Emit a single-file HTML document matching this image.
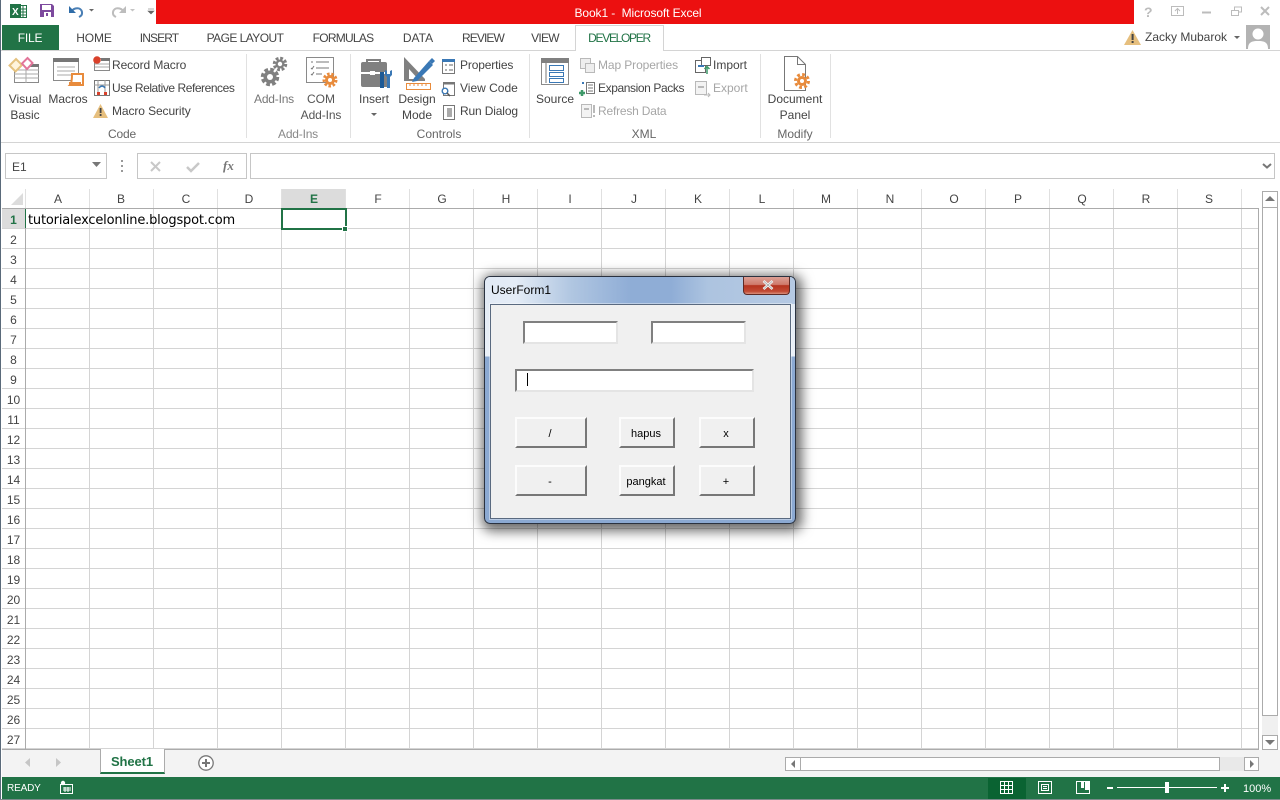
<!DOCTYPE html>
<html><head><meta charset="utf-8"><title>Book1 - Microsoft Excel</title>
<style>
html,body{margin:0;padding:0;width:1280px;height:800px;overflow:hidden;background:#fff}
body{position:relative;font-family:"Liberation Sans",sans-serif;font-size:12px;color:#444}
.t{position:absolute;white-space:nowrap;line-height:16px}
.c{transform:translateX(-50%);text-align:center}
.b{position:absolute;box-sizing:border-box}
svg{position:absolute;overflow:visible}
.tab{position:absolute;top:30px;font-size:12px;line-height:16px;color:#444;white-space:nowrap;transform:translateX(-50%)}
.g{color:#a6a6a6}
.grp{color:#666}
.sep{position:absolute;top:54px;width:1px;height:84px;background:#e1e1e1}
.ch{position:absolute;top:191px;font-size:12px;line-height:16px;color:#444;transform:translateX(-50%)}
.rh{position:absolute;left:2px;width:23px;text-align:center;font-size:12px;line-height:16px;color:#444}
.tb{position:absolute;box-sizing:border-box;background:#fff;border:2px solid;border-color:#808080 #e4e4e4 #e4e4e4 #808080}
.btn{position:absolute;box-sizing:border-box;background:#f0f0f0;border:2px solid;border-color:#fcfcfc #777 #777 #fcfcfc;color:#000;font-size:11px;text-align:center;line-height:30px;padding-right:2px}
</style></head><body>

<!-- title bar -->
<div class="b" style="left:156px;top:0;width:978px;height:24px;background:#ec1010"></div>
<div class="t c" style="left:638px;top:5px;color:#fff;font-size:12px;letter-spacing:-.1px">Book1 -&nbsp; Microsoft Excel</div>

<!-- QAT -->
<svg style="left:0;top:0" width="156" height="25">
<rect x="17.500" y="5.500" width="9" height="12" fill="#fff" stroke="#217346"/><path d="M20 9h6M20 12h6M20 15h6M23 5v12" stroke="#217346" fill="none"/>
<rect x="10" y="4" width="11" height="14" fill="#217346"/><text x="12" y="15" font-size="10" font-weight="700" fill="#fff" font-family="Liberation Sans">X</text>
<path d="M40 4h12l2 2v11H40z" fill="#7d4a9e"/><rect x="42" y="5" width="9" height="5" fill="#fff"/><rect x="44" y="12" width="7" height="5" fill="#fff"/><rect x="46" y="13" width="2" height="3" fill="#7d4a9e"/>
<path d="M71 12c3-5 10-5 11 0 .4 3-1 4-3 5" fill="none" stroke="#4a7fb5" stroke-width="2"/><path d="M69 6v7h7z" fill="#2f6ca8"/>
<path d="M89 9h5l-2.500 2.500z" fill="#666"/>
<path d="M124 12c-3-5-10-5-11 0-.4 3 1 4 3 5" fill="none" stroke="#bdbdbd" stroke-width="2"/><path d="M126 6v7h-7z" fill="#bdbdbd"/>
<path d="M130 9h5l-2.500 2.500z" fill="#c4c4c4"/>
<path d="M148 9h6M148 11h6l-3 3z" fill="#666" stroke="#666" stroke-width=".6"/>
</svg>

<!-- window controls -->
<svg style="left:1080px;top:0" width="200" height="25">
<text x="64" y="17" font-size="14" font-weight="700" fill="#bcbcbc" font-family="Liberation Sans">?</text>
<rect x="91.500" y="6.500" width="12" height="9" fill="none" stroke="#bcbcbc"/><path d="M97.500 14v-5M95 11l2.500-2.500 2.500 2.500" fill="none" stroke="#bcbcbc"/>
<path d="M122 12.500h9" stroke="#bcbcbc" stroke-width="2"/>
<path d="M151.500 10.500h7v5h-7zM154.500 10v-3h7v5h-3" fill="none" stroke="#bcbcbc" stroke-width="1"/>
<path d="M181 7l8 8M189 7l-8 8" stroke="#bcbcbc" stroke-width="2"/>
</svg>

<!-- tabs -->
<div class="b" style="left:2px;top:25px;width:57px;height:25px;background:#217346"></div>
<div class="t c" style="left:30px;top:30px;color:#fff;letter-spacing:-.2px">FILE</div>
<div class="tab" style="left:94px;letter-spacing:-.1px">HOME</div>
<div class="tab" style="left:159px;letter-spacing:-.9px">INSERT</div>
<div class="tab" style="left:245px;letter-spacing:-.55px">PAGE LAYOUT</div>
<div class="tab" style="left:343px;letter-spacing:-.75px">FORMULAS</div>
<div class="tab" style="left:418px">DATA</div>
<div class="tab" style="left:483px;letter-spacing:-.9px">REVIEW</div>
<div class="tab" style="left:545px;letter-spacing:-.7px">VIEW</div>
<div class="b" style="left:0;top:50px;width:1280px;height:1px;background:#d4d4d4"></div>
<div class="b" style="left:575px;top:25px;width:89px;height:26px;background:#fff;border:1px solid #d4d4d4;border-bottom:0"></div>
<div class="tab" style="left:619px;color:#217346;letter-spacing:-1.3px">DEVELOPER</div>
<div class="b" style="left:0;top:142px;width:1280px;height:1px;background:#d4d4d4"></div>
<div class="b" style="left:0;top:0;width:1px;height:800px;background:#5a6a7a"></div>

<!-- account -->
<svg style="left:1124px;top:28px" width="156" height="22">
<path d="M8.500 2L17 17H0z" fill="#e6bf7e"/><rect x="7.600" y="6" width="2" height="6" fill="#444"/><rect x="7.600" y="13" width="2" height="2" fill="#444"/>
<path d="M110 8h6l-3 3z" fill="#666"/>
<rect x="122" y="-3" width="24" height="24" fill="#b3b3b3"/><circle cx="134" cy="6" r="5.500" fill="#fff"/><path d="M124 21c0-7 4-8 10-8s10 1 10 8z" fill="#fff"/>
</svg>
<div class="t" style="left:1145px;top:29px;color:#444">Zacky Mubarok</div>

<!-- ribbon icons: Code -->
<svg style="left:0;top:50px" width="240" height="92">
<g fill="none" stroke="#8a8a8a"><rect x="14.500" y="14.500" width="24" height="18" fill="#fff"/><path d="M14 20h25M14 24h25M14 28h25" stroke="#aaa"/><path d="M26 15v18" stroke="#aaa"/></g>
<rect x="28" y="14" width="11" height="3" fill="#777"/>
<path d="M16 9l6 6-6.500 6.500-6-6z" fill="#fff4dc" stroke="#e5c27f" stroke-width="2"/>
<path d="M27.500 8l5 5-5.500 6-5-5.500z" fill="#fff" stroke="#e2769a" stroke-width="2"/>
<rect x="53.500" y="8.500" width="25" height="22" fill="#fff" stroke="#8a8a8a"/><rect x="53" y="8" width="26" height="4" fill="#777"/><path d="M57 17h18M57 21h18M57 25h18" stroke="#aaa"/>
<path d="M72 24h11v11h-13c2-2 2-8 2-11z" fill="#fff" stroke="#e88b3c" stroke-width="2"/><rect x="69" y="32" width="12" height="3" fill="#e88b3c"/>
<rect x="94.500" y="8.500" width="15" height="12" fill="#fff" stroke="#8a8a8a"/><path d="M95 14h14M95 17h14" stroke="#aaa"/><rect x="101" y="8" width="9" height="3" fill="#777"/><circle cx="97" cy="10" r="3.800" fill="#d9412b"/>
<rect x="94.500" y="30.500" width="15" height="15" fill="#fff" stroke="#777"/><path d="M94 35h15M98 30v15M105 30v15" stroke="#999"/><rect x="97" y="42" width="3" height="3" fill="#d9412b"/><rect x="104" y="42" width="3" height="3" fill="#d9412b"/><path d="M99 38c2-3 5-2 6 0" fill="none" stroke="#3a78b5" stroke-width="1.500"/>
<path d="M100.500 54l7.500 14H93z" fill="#e6bf7e"/><rect x="99.700" y="58" width="1.800" height="5" fill="#444"/><rect x="99.700" y="64" width="1.800" height="2" fill="#444"/>
</svg>
<div class="t" style="left:112px;top:57px;letter-spacing:-.1px">Record Macro</div>
<div class="t" style="left:112px;top:80px;letter-spacing:-.45px">Use Relative References</div>
<div class="t" style="left:112px;top:103px;letter-spacing:-.1px">Macro Security</div>
<div class="t c" style="left:25px;top:91px">Visual</div>
<div class="t c" style="left:25px;top:107px">Basic</div>
<div class="t c" style="left:68px;top:91px">Macros</div>
<div class="t c grp" style="left:122px;top:126px;letter-spacing:-.2px">Code</div>
<div class="sep" style="left:246px"></div>

<!-- Add-ins -->
<svg style="left:250px;top:50px" width="95" height="40">
<g fill="#808080"><circle cx="20" cy="27" r="6.500"/><circle cx="30" cy="14" r="4.500"/></g>
<g stroke="#808080" stroke-width="3.500" fill="none"><circle cx="20" cy="27" r="7.500" stroke-dasharray="3.700 2.190"/><circle cx="30" cy="14" r="5.500" stroke-dasharray="2.700 1.620"/></g>
<circle cx="20" cy="27" r="3" fill="#fff"/><circle cx="30" cy="14" r="2.200" fill="#fff"/>
<rect x="56.500" y="7.500" width="27" height="25" fill="#fff" stroke="#8a8a8a"/><path d="M61 12h2M66 12h13M61 18l1 1 2-3M66 18h13M61 24l1 1 2-3M66 24h6" stroke="#777" fill="none"/>
<circle cx="80" cy="30" r="5" fill="#e88b3c"/><circle cx="80" cy="30" r="6" fill="none" stroke="#e88b3c" stroke-width="3" stroke-dasharray="2.500 1.700"/><circle cx="80" cy="30" r="2" fill="#fff"/>
</svg>
<div class="t c" style="left:274px;top:91px;color:#777;letter-spacing:-.2px">Add-Ins</div>
<div class="t c" style="left:321px;top:91px;color:#555">COM</div>
<div class="t c" style="left:321px;top:107px;color:#555;letter-spacing:-.1px">Add-Ins</div>
<div class="t c" style="left:298px;top:126px;color:#888;letter-spacing:-.2px">Add-Ins</div>
<div class="sep" style="left:350px"></div>

<!-- Controls -->
<svg style="left:350px;top:50px" width="110" height="92">
<path d="M17 13v-3h13v3" fill="none" stroke="#808080" stroke-width="2"/>
<path d="M11 14a2 2 0 0 1 2-2h22a2 2 0 0 1 2 2v8H11z" fill="#808080"/><path d="M11 24h27v13H13a2 2 0 0 1-2-2z" fill="#808080"/><rect x="20" y="21" width="5" height="4" fill="#fff"/>
<rect x="30" y="22" width="4" height="16" fill="#1d5a96"/><path d="M42 20v5l-2 2v11h-3V27l-2-2v-5l2 1v3h3v-3z" fill="#3a78b5"/>
<path d="M54 7l21 22v2H54z" fill="#808080"/><path d="M59 19l9 10h-9z" fill="#fff"/>
<path d="M64 28l15-17 4 4-16 16-5 1z" fill="#3a78b5"/><path d="M79 11l3-3 3 3-3 3z" fill="#3a78b5"/>
<rect x="56.500" y="33.500" width="24" height="6" fill="#fff" stroke="#e88b3c"/><path d="M60 34v2M64 34v2M68 34v2M72 34v2M76 34v2" stroke="#e88b3c"/>
<rect x="92.500" y="9.500" width="12" height="14" fill="#fff" stroke="#777"/><rect x="92" y="9" width="13" height="3" fill="#3a78b5"/><path d="M95 15h2M99 15h4M95 20h2M99 20h4" stroke="#666"/>
<rect x="93.500" y="32.500" width="11" height="13" fill="#fff" stroke="#777"/><rect x="93" y="32" width="12" height="2.500" fill="#777"/><circle cx="95" cy="41" r="2.800" fill="#fff" stroke="#3a78b5" stroke-width="1.400"/><path d="M97 43l3 3" stroke="#555" stroke-width="1.500"/>
<rect x="93.500" y="55.500" width="11" height="14" fill="#fff" stroke="#777"/><rect x="97" y="58" width="5" height="9" fill="#aaa"/>
</svg>
<div class="t c" style="left:374px;top:91px">Insert</div>
<svg style="left:371px;top:113px" width="8" height="5"><path d="M0 0h6l-3 3z" fill="#666"/></svg>
<div class="t c" style="left:417px;top:91px">Design</div>
<div class="t c" style="left:417px;top:107px">Mode</div>
<div class="t" style="left:460px;top:57px;letter-spacing:-.15px">Properties</div>
<div class="t" style="left:460px;top:80px">View Code</div>
<div class="t" style="left:460px;top:103px;letter-spacing:-.15px">Run Dialog</div>
<div class="t c grp" style="left:439px;top:126px">Controls</div>
<div class="sep" style="left:529px"></div>

<!-- XML -->
<svg style="left:530px;top:50px" width="240" height="92">
<rect x="11.500" y="8.500" width="27" height="26" fill="#fff" stroke="#8a8a8a"/><rect x="11" y="8" width="28" height="5" fill="#808080"/><path d="M16 13v20" stroke="#777"/>
<g fill="#fff" stroke="#3a78b5"><rect x="19.500" y="15.500" width="14" height="5"/><rect x="19.500" y="22.500" width="14" height="4"/><rect x="19.500" y="28.500" width="14" height="4"/></g>
<g fill="#eee" stroke="#b9b9b9"><rect x="50.500" y="8.500" width="10" height="10"/><rect x="55.500" y="13.500" width="9" height="9"/></g>
<path d="M52 33h2M56 33h2" stroke="#3a78b5" stroke-width="2"/><rect x="56.500" y="32.500" width="8" height="11" fill="#fff" stroke="#777"/><path d="M58 35h5M58 38h5M58 41h5" stroke="#777"/>
<path d="M49 43h6M52 40v6" stroke="#3f9a6a" stroke-width="2.500"/>
<rect x="51.500" y="54.500" width="10" height="13" fill="#f3f3f3" stroke="#b9b9b9"/><path d="M54 59h5" stroke="#b9b9b9" stroke-width="2"/><path d="M64 55v8M64 65v2" stroke="#b9b9b9" stroke-width="2"/>
<rect x="165.500" y="10.500" width="10" height="12" fill="#fff" stroke="#666"/><rect x="171.500" y="7.500" width="9" height="8" fill="#fff" stroke="#666"/><path d="M168 16h6" stroke="#3a78b5" stroke-width="2"/><path d="M177 24v-7M174.500 19l2.500-2.500 2.500 2.500" fill="none" stroke="#3f9a6a" stroke-width="1.500"/>
<rect x="165.500" y="31.500" width="11" height="13" fill="#f3f3f3" stroke="#b9b9b9"/><path d="M168 37h6" stroke="#b9b9b9" stroke-width="2"/><path d="M174 45h6M178 43l2 2-2 2" fill="none" stroke="#b9b9b9"/>
</svg>
<div class="t c" style="left:555px;top:91px">Source</div>
<div class="t g" style="left:598px;top:57px;letter-spacing:-.1px">Map Properties</div>
<div class="t" style="left:598px;top:80px;letter-spacing:-.4px">Expansion Packs</div>
<div class="t g" style="left:598px;top:103px;letter-spacing:-.2px">Refresh Data</div>
<div class="t" style="left:713px;top:57px">Import</div>
<div class="t g" style="left:713px;top:80px">Export</div>
<div class="t c grp" style="left:644px;top:126px">XML</div>
<div class="sep" style="left:760px"></div>

<!-- Modify -->
<svg style="left:780px;top:55px" width="36" height="36">
<path d="M4.500 1.500h13l8 8v26h-21z" fill="#fff" stroke="#777"/><path d="M17.500 1.500v8h8" fill="none" stroke="#777"/>
<circle cx="22" cy="26" r="5" fill="#e88b3c"/><circle cx="22" cy="26" r="6.500" fill="none" stroke="#e88b3c" stroke-width="3" stroke-dasharray="2.800 2.300"/><circle cx="22" cy="26" r="2" fill="#fff"/>
</svg>
<div class="t c" style="left:795px;top:91px">Document</div>
<div class="t c" style="left:795px;top:107px">Panel</div>
<div class="t c grp" style="left:795px;top:126px">Modify</div>
<div class="sep" style="left:830px"></div>

<!-- formula bar -->
<div class="b" style="left:5px;top:153px;width:102px;height:26px;border:1px solid #c6c6c6"></div>
<div class="t" style="left:12px;top:159px">E1</div>
<svg style="left:92px;top:162px" width="12" height="8"><path d="M0 0h9l-4.500 5z" fill="#777"/></svg>
<svg style="left:119px;top:160px" width="6" height="14"><path d="M3 0v2M3 5v2M3 10v2" stroke="#999" stroke-width="2"/></svg>
<div class="b" style="left:137px;top:153px;width:110px;height:26px;border:1px solid #c6c6c6"></div>
<svg style="left:150px;top:161px" width="85" height="12">
<path d="M1 1l9 9M10 1l-9 9" stroke="#c8c8c8" stroke-width="2"/>
<path d="M37 6l4 4 8-8" fill="none" stroke="#c8c8c8" stroke-width="2.500"/>
</svg>
<div class="t" style="left:223px;top:158px;font-family:'Liberation Serif',serif;font-style:italic;font-weight:700;color:#777;font-size:13px">fx</div>
<div class="b" style="left:250px;top:153px;width:1025px;height:26px;border:1px solid #c6c6c6"></div>
<svg style="left:1262px;top:163px" width="10" height="7"><path d="M1 1l4 3.500L9 1" fill="none" stroke="#777" stroke-width="2"/></svg>

<!-- column headers -->
<div class="b" style="left:281px;top:189px;width:65px;height:19px;background:#dcdcdc"></div>
<svg style="left:11px;top:193px" width="12" height="13"><path d="M12 0v12H0z" fill="#dcdcdc"/></svg>
<div class="b" style="left:25px;top:189px;width:1233px;height:19px;background-image:linear-gradient(90deg,#e0e0e0 1px,transparent 1px);background-size:64px 100%"></div>
<div class="ch" style="left:58px">A</div><div class="ch" style="left:121px">B</div><div class="ch" style="left:186px">C</div><div class="ch" style="left:249px">D</div>
<div class="ch" style="left:314px;color:#217346;font-weight:700">E</div>
<div class="ch" style="left:378px">F</div><div class="ch" style="left:442px">G</div><div class="ch" style="left:506px">H</div><div class="ch" style="left:570px">I</div><div class="ch" style="left:634px">J</div><div class="ch" style="left:698px">K</div><div class="ch" style="left:762px">L</div><div class="ch" style="left:826px">M</div><div class="ch" style="left:890px">N</div><div class="ch" style="left:954px">O</div><div class="ch" style="left:1018px">P</div><div class="ch" style="left:1082px">Q</div><div class="ch" style="left:1146px">R</div><div class="ch" style="left:1209px">S</div>

<!-- grid -->
<div class="b" style="left:25px;top:209px;width:1233px;height:540px;background-image:linear-gradient(90deg,#d4d4d4 1px,transparent 1px),linear-gradient(180deg,transparent 19px,#d4d4d4 19px,#d4d4d4 20px,transparent 20px);background-size:64px 100%,100% 20px"></div>
<div class="b" style="left:2px;top:208px;width:1256px;height:1px;background:#ababab"></div>
<div class="b" style="left:2px;top:749px;width:1257px;height:1px;background:#ababab"></div>
<div class="b" style="left:1258px;top:208px;width:1px;height:541px;background:#ababab"></div>
<div class="b" style="left:25px;top:208px;width:1px;height:541px;background:#ababab"></div>
<div class="b" style="left:2px;top:209px;width:23px;height:19px;background:#dcdcdc"></div>
<div class="b" style="left:2px;top:209px;width:23px;height:540px;background-image:linear-gradient(180deg,transparent 19px,#d4d4d4 19px,#d4d4d4 20px,transparent 20px);background-size:100% 20px"></div>
<div class="b" style="left:25px;top:209px;width:1px;height:19px;background:#217346"></div>
<div class="rh" style="top:212px;color:#217346;font-weight:700">1</div>
<div class="rh" style="top:232px">2</div><div class="rh" style="top:252px">3</div><div class="rh" style="top:272px">4</div><div class="rh" style="top:292px">5</div><div class="rh" style="top:312px">6</div><div class="rh" style="top:332px">7</div><div class="rh" style="top:352px">8</div><div class="rh" style="top:372px">9</div><div class="rh" style="top:392px">10</div><div class="rh" style="top:412px">11</div><div class="rh" style="top:432px">12</div><div class="rh" style="top:452px">13</div><div class="rh" style="top:472px">14</div><div class="rh" style="top:492px">15</div><div class="rh" style="top:512px">16</div><div class="rh" style="top:532px">17</div><div class="rh" style="top:552px">18</div><div class="rh" style="top:572px">19</div><div class="rh" style="top:592px">20</div><div class="rh" style="top:612px">21</div><div class="rh" style="top:632px">22</div><div class="rh" style="top:652px">23</div><div class="rh" style="top:672px">24</div><div class="rh" style="top:692px">25</div><div class="rh" style="top:712px">26</div><div class="rh" style="top:732px">27</div>

<div class="t" style="left:28px;top:213px;color:#000;font-family:'DejaVu Sans',sans-serif;font-size:13px;letter-spacing:-.18px">tutorialexcelonline.blogspot.com</div>
<div class="b" style="left:281px;top:208px;width:66px;height:22px;border:2px solid #217346"></div>
<div class="b" style="left:342px;top:226px;background:#217346;border:1px solid #fff;box-sizing:content-box;width:4px;height:4px"></div>

<!-- vertical scrollbar -->
<div class="b" style="left:1262px;top:191px;width:16px;height:559px;background:#f0f0f0"></div>
<div class="b" style="left:1262px;top:191px;width:16px;height:17px;background:#fff;border:1px solid #ababab"></div>
<div class="b" style="left:1262px;top:207px;width:16px;height:509px;background:#fff;border:1px solid #ababab"></div>
<div class="b" style="left:1262px;top:735px;width:16px;height:15px;background:#fff;border:1px solid #ababab"></div>
<svg style="left:1265px;top:196px" width="10" height="6"><path d="M5 0l5 5H0z" fill="#777"/></svg>
<svg style="left:1265px;top:740px" width="10" height="6"><path d="M0 0h10L5 5z" fill="#777"/></svg>

<!-- sheet tabs -->
<div class="b" style="left:2px;top:750px;width:1278px;height:28px;background:#f3f3f3"></div>
<svg style="left:25px;top:758px" width="36" height="10"><path d="M5 0v9L0 4.500z" fill="#c6c6c6"/><path d="M31 0v9l5-4.500z" fill="#c6c6c6"/></svg>
<div class="b" style="left:100px;top:749px;width:65px;height:25px;background:#fff;border:1px solid #ababab;border-top:0;border-bottom:2px solid #217346"></div>
<div class="t c" style="left:132px;top:754px;color:#217346;font-weight:700;font-size:13px;letter-spacing:-.1px">Sheet1</div>
<svg style="left:198px;top:755px" width="16" height="16"><circle cx="8" cy="8" r="7.200" fill="#fff" stroke="#777" stroke-width="1.300"/><path d="M4 8h8M8 4v8" stroke="#777" stroke-width="2"/></svg>

<!-- horizontal scrollbar -->
<div class="b" style="left:785px;top:757px;width:473px;height:14px;background:#e9e9e9"></div>
<div class="b" style="left:785px;top:757px;width:16px;height:14px;background:#fff;border:1px solid #ababab"></div>
<div class="b" style="left:800px;top:757px;width:420px;height:14px;background:#fff;border:1px solid #ababab"></div>
<div class="b" style="left:1244px;top:757px;width:15px;height:14px;background:#fff;border:1px solid #ababab"></div>
<svg style="left:790px;top:760px" width="6" height="9"><path d="M5 0v8L1 4z" fill="#777"/></svg>
<svg style="left:1250px;top:760px" width="6" height="9"><path d="M0 0v8l4-4z" fill="#777"/></svg>

<!-- status bar -->
<div class="b" style="left:2px;top:777px;width:1278px;height:22px;background:#217346"></div>
<div class="b" style="left:0;top:799px;width:1280px;height:1px;background:#7a8a8a"></div>
<div class="t" style="left:7px;top:781px;color:#fff;font-size:10px;letter-spacing:-.15px">READY</div>
<svg style="left:60px;top:781px" width="14" height="14"><rect x=".5" y="3.500" width="12" height="9" fill="#217346" stroke="#fff"/><path d="M3 7h8M3 9h8M5 6v5M8 6v5" stroke="#fff"/><circle cx="3" cy="2" r="2.200" fill="#fff"/></svg>
<div class="b" style="left:988px;top:778px;width:38px;height:21px;background:#0a6332"></div>
<svg style="left:1000px;top:781px" width="13" height="14"><path d="M.5.500h12v12H.500zM.5 4.500h12M.5 8.500h12M4.500.500v12M8.500.500v12" fill="none" stroke="#fff"/></svg>
<svg style="left:1038px;top:781px" width="14" height="14"><path d="M.5.500h13v12H.500z" fill="none" stroke="#fff"/><path d="M3.500 3.500h7v6h-7zM5 5.500h4M5 7.500h4" fill="none" stroke="#fff"/></svg>
<svg style="left:1076px;top:781px" width="14" height="14"><path d="M.5.500h13v12H.500z" fill="none" stroke="#fff"/><rect x="5" y="1" width="3" height="6" fill="#fff"/><rect x="9" y="1" width="4" height="8" fill="#fff"/></svg>
<svg style="left:1106px;top:781px" width="130" height="14">
<path d="M1 7h6" stroke="#fff" stroke-width="2"/><path d="M11 6.500h100" stroke="#fff"/><rect x="59" y="1" width="4" height="11" fill="#fff"/>
<path d="M115 7h8M119 3v8" stroke="#fff" stroke-width="2"/></svg>
<div class="t" style="left:1243px;top:781px;color:#fff;font-size:11px">100%</div>

<!-- dialog -->
<div class="b" style="left:484px;top:276px;width:312px;height:248px;border-radius:6px;border:1px solid #2a3240;box-shadow:2px 3px 12px 4px rgba(0,0,0,.6);background:linear-gradient(180deg,#dfe8f3 0,#eaf0f8 79px,#8ba9d2 80px,#8ba9d2 100%)"></div>
<div class="b" style="left:485px;top:277px;width:310px;height:27px;border-radius:5px 5px 0 0;background:linear-gradient(90deg,#e2eaf5 0,#e4ecf6 10%,#b0c6e1 28%,#8fadd6 47%,#8fadd6 60%,#adc4e0 72%,#b5c9e3 100%)"></div>
<div class="b" style="left:490px;top:304px;width:301px;height:215px;background:#f0f0f0;border:1px solid #5a6a80;box-shadow:0 0 0 1px rgba(255,255,255,.4)"></div>
<div class="t" style="left:491px;top:282px;color:#000;font-size:12px">UserForm1</div>
<div class="b" style="left:743px;top:277px;width:47px;height:18px;border-radius:0 0 4px 4px;background:linear-gradient(180deg,#dc9f95 0,#cf7a6b 45%,#b5331f 50%,#c24b35 85%,#d98f7c 100%);border:1px solid #5e2a25;border-top:0"></div>
<svg style="left:762px;top:280px" width="12" height="10"><path d="M1.500 1l9 8M10.500 1l-9 8" stroke="#eee" stroke-width="2.600"/><path d="M2 1.500l8 7M10 1.500l-8 7" stroke="#777" stroke-width=".5"/></svg>
<div class="tb" style="left:523px;top:321px;width:95px;height:23px"></div>
<div class="tb" style="left:651px;top:321px;width:95px;height:23px"></div>
<div class="tb" style="left:515px;top:369px;width:239px;height:23px"></div>
<div class="b" style="left:527px;top:373px;width:1px;height:13px;background:#000"></div>
<div class="btn" style="left:515px;top:417px;width:72px;height:31px">/</div>
<div class="btn" style="left:619px;top:417px;width:56px;height:31px">hapus</div>
<div class="btn" style="left:699px;top:417px;width:56px;height:31px">x</div>
<div class="btn" style="left:515px;top:465px;width:72px;height:31px">-</div>
<div class="btn" style="left:619px;top:465px;width:56px;height:31px">pangkat</div>
<div class="btn" style="left:699px;top:465px;width:56px;height:31px">+</div>

</body></html>
